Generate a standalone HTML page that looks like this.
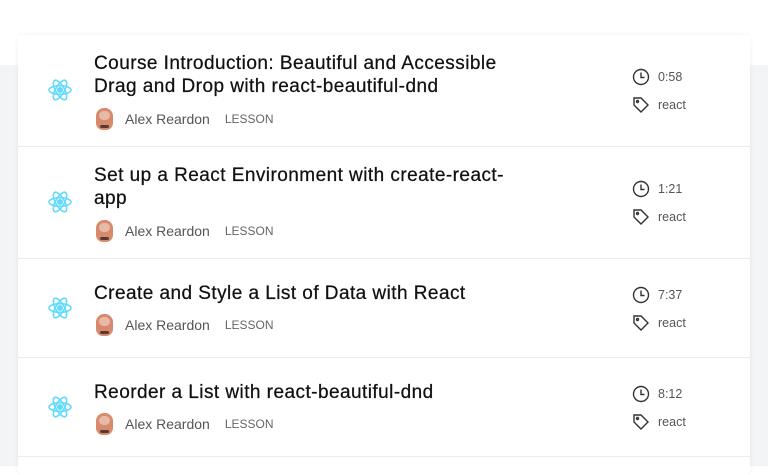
<!DOCTYPE html><html><head><style>
body{margin:0;width:768px;height:466px;overflow:hidden;background:#fff;font-family:"Liberation Sans",sans-serif;position:relative}
.bg{position:absolute;left:0;top:65px;width:768px;height:401px;background:#f3f4f6}
.card{position:absolute;left:18px;top:35px;width:732px;height:440px;background:#fff;box-shadow:0 0 6px rgba(0,0,0,.06);border-radius:4px}
.row{position:absolute;left:18px;width:732px;border-bottom:1px solid #ececef}
.t{position:absolute;left:94px;font-size:19px;line-height:23px;color:#111;width:422px;letter-spacing:0.45px;-webkit-text-stroke:0.25px #111}
.a{position:absolute;left:96px;height:22px;display:flex;align-items:center;font-size:14px;color:#555}
.av{width:17px;height:22px;border-radius:8px 8px 7px 7px;background:#d88a6e;margin-right:12px;position:relative}
.av:before{content:"";position:absolute;left:3px;top:3px;width:11px;height:9px;border-radius:5px;background:#e8b9a6}
.av:after{content:"";position:absolute;left:4px;bottom:2px;width:9px;height:3px;background:#5a3a30;border-radius:2px}
.ls{font-size:12px;margin-left:15px;color:#666}
.ic{position:absolute;left:47px}
.m{position:absolute;left:632px;font-size:12.5px;color:#555;display:flex;align-items:center}
.m svg{margin-right:8px}
</style></head><body>
<div class="bg"></div><div class="card"></div>
<div class="row" style="top:35px;height:111px"></div>
<div class="row" style="top:147px;height:111px"></div>
<div class="row" style="top:259px;height:98px"></div>
<div class="row" style="top:358px;height:98px"></div>

<div class="t" style="top:52px">Course Introduction: Beautiful and Accessible Drag and Drop with react-beautiful-dnd</div>
<div class="a" style="top:108px"><div class="av"></div>Alex Reardon<span class="ls">LESSON</span></div>
<svg class="ic" style="top:78px" width="26" height="24" viewBox="-13 -12 26 24" fill="none" stroke="#61dafb" stroke-width="1.6"><circle r="2.2" fill="#61dafb"/><ellipse rx="11" ry="4.3"/><ellipse rx="11" ry="4.3" transform="rotate(60)"/><ellipse rx="11" ry="4.3" transform="rotate(120)"/></svg>
<div class="m" style="top:68px"><svg width="18" height="18" viewBox="0 0 18 18" fill="none" stroke="#333" stroke-width="1.4"><circle cx="9" cy="9" r="7.5"/><path d="M9 4.5V9.5H12.5"/></svg>0:58</div>
<div class="m" style="top:96px"><svg width="18" height="18" viewBox="0 0 18 18" fill="none" stroke="#333" stroke-width="1.4"><path d="M2 2h7l7 7-7 7-7-7z"/><circle cx="5.5" cy="5.5" r="1"/></svg>react</div>

<div class="t" style="top:164px">Set up a React Environment with create-react-app</div>
<div class="a" style="top:220px"><div class="av"></div>Alex Reardon<span class="ls">LESSON</span></div>
<svg class="ic" style="top:190px" width="26" height="24" viewBox="-13 -12 26 24" fill="none" stroke="#61dafb" stroke-width="1.6"><circle r="2.2" fill="#61dafb"/><ellipse rx="11" ry="4.3"/><ellipse rx="11" ry="4.3" transform="rotate(60)"/><ellipse rx="11" ry="4.3" transform="rotate(120)"/></svg>
<div class="m" style="top:180px"><svg width="18" height="18" viewBox="0 0 18 18" fill="none" stroke="#333" stroke-width="1.4"><circle cx="9" cy="9" r="7.5"/><path d="M9 4.5V9.5H12.5"/></svg>1:21</div>
<div class="m" style="top:208px"><svg width="18" height="18" viewBox="0 0 18 18" fill="none" stroke="#333" stroke-width="1.4"><path d="M2 2h7l7 7-7 7-7-7z"/><circle cx="5.5" cy="5.5" r="1"/></svg>react</div>

<div class="t" style="top:282px">Create and Style a List of Data with React</div>
<div class="a" style="top:314px"><div class="av"></div>Alex Reardon<span class="ls">LESSON</span></div>
<svg class="ic" style="top:296px" width="26" height="24" viewBox="-13 -12 26 24" fill="none" stroke="#61dafb" stroke-width="1.6"><circle r="2.2" fill="#61dafb"/><ellipse rx="11" ry="4.3"/><ellipse rx="11" ry="4.3" transform="rotate(60)"/><ellipse rx="11" ry="4.3" transform="rotate(120)"/></svg>
<div class="m" style="top:286px"><svg width="18" height="18" viewBox="0 0 18 18" fill="none" stroke="#333" stroke-width="1.4"><circle cx="9" cy="9" r="7.5"/><path d="M9 4.5V9.5H12.5"/></svg>7:37</div>
<div class="m" style="top:314px"><svg width="18" height="18" viewBox="0 0 18 18" fill="none" stroke="#333" stroke-width="1.4"><path d="M2 2h7l7 7-7 7-7-7z"/><circle cx="5.5" cy="5.5" r="1"/></svg>react</div>

<div class="t" style="top:381px">Reorder a List with react-beautiful-dnd</div>
<div class="a" style="top:413px"><div class="av"></div>Alex Reardon<span class="ls">LESSON</span></div>
<svg class="ic" style="top:395px" width="26" height="24" viewBox="-13 -12 26 24" fill="none" stroke="#61dafb" stroke-width="1.6"><circle r="2.2" fill="#61dafb"/><ellipse rx="11" ry="4.3"/><ellipse rx="11" ry="4.3" transform="rotate(60)"/><ellipse rx="11" ry="4.3" transform="rotate(120)"/></svg>
<div class="m" style="top:385px"><svg width="18" height="18" viewBox="0 0 18 18" fill="none" stroke="#333" stroke-width="1.4"><circle cx="9" cy="9" r="7.5"/><path d="M9 4.5V9.5H12.5"/></svg>8:12</div>
<div class="m" style="top:413px"><svg width="18" height="18" viewBox="0 0 18 18" fill="none" stroke="#333" stroke-width="1.4"><path d="M2 2h7l7 7-7 7-7-7z"/><circle cx="5.5" cy="5.5" r="1"/></svg>react</div>
</body></html>
